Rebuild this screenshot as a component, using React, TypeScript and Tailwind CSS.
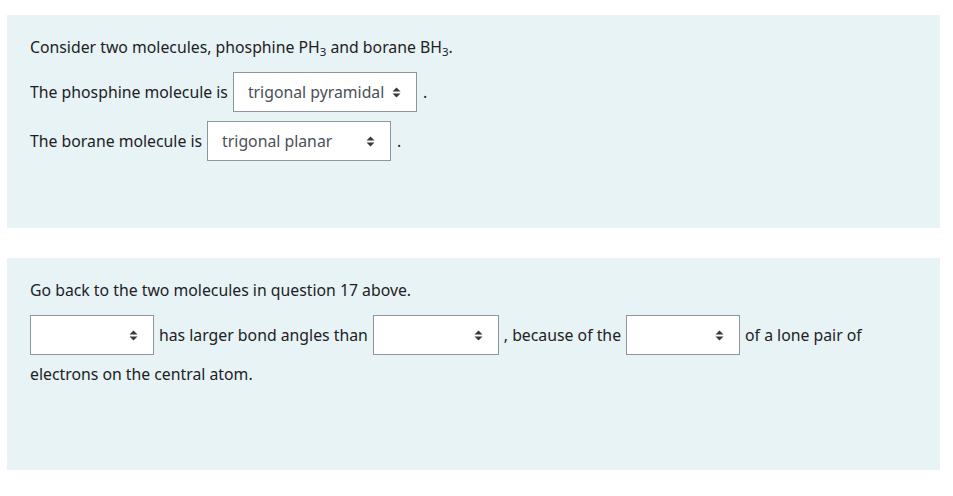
import React from 'react';

function Arrows() {
    return (
        <svg width="9" height="11" viewBox="0 0 9 11" className="shrink-0">
            <path d="M4.5 0.5 L8.5 4.5 L0.5 4.5 Z" fill="#343a40" />
            <path d="M4.5 10.5 L8.5 6.5 L0.5 6.5 Z" fill="#343a40" />
        </svg>
    );
}

function Select({ value, width }: { value?: string; width: string }) {
    return (
        <span className={`inline-flex h-[40px] items-center justify-between border border-[#8f959e] bg-white pl-[14px] pr-[15px] text-[#495057] ${width}`}>
            <span>{value ?? ''}</span>
            <Arrows />
        </span>
    );
}

export default function App() {
    return (
        <div
            className="min-h-[496px] bg-white pt-[15px] pl-[7px] pr-[13px] text-[15.8px] leading-[22px] text-[#1d2125]"
            style={{ fontFamily: '"Noto Sans", "Open Sans", sans-serif' }}
        >
            <div className="h-[213px] bg-[#e7f3f5] px-[23px] pt-[21px]">
                <div>
                    Consider two molecules, phosphine PH<sub className="text-[11.5px]">3</sub> and borane BH<sub className="text-[11.5px]">3</sub>.
                </div>
                <div className="mt-[14px] flex items-center gap-[5px]">
                    <span>The phosphine molecule is</span>
                    <Select value="trigonal pyramidal" width="w-[184px]" />
                    <span className="ml-[1px]">.</span>
                </div>
                <div className="mt-[9px] flex items-center gap-[5px]">
                    <span>The borane molecule is</span>
                    <Select value="trigonal planar" width="w-[184px]" />
                    <span className="ml-[1px]">.</span>
                </div>
            </div>

            <div className="mt-[30px] h-[212px] bg-[#e7f3f5] px-[23px] pt-[21px]">
                <div>Go back to the two molecules in question 17 above.</div>
                <div className="mt-[14px] flex items-center gap-[5px]">
                    <Select width="w-[124px]" />
                    <span>has larger bond angles than</span>
                    <Select width="w-[126px]" />
                    <span>, because of the</span>
                    <Select width="w-[114px]" />
                    <span>of a lone pair of</span>
                </div>
                <div className="mt-[8px]">electrons on the central atom.</div>
            </div>
        </div>
    );
}
